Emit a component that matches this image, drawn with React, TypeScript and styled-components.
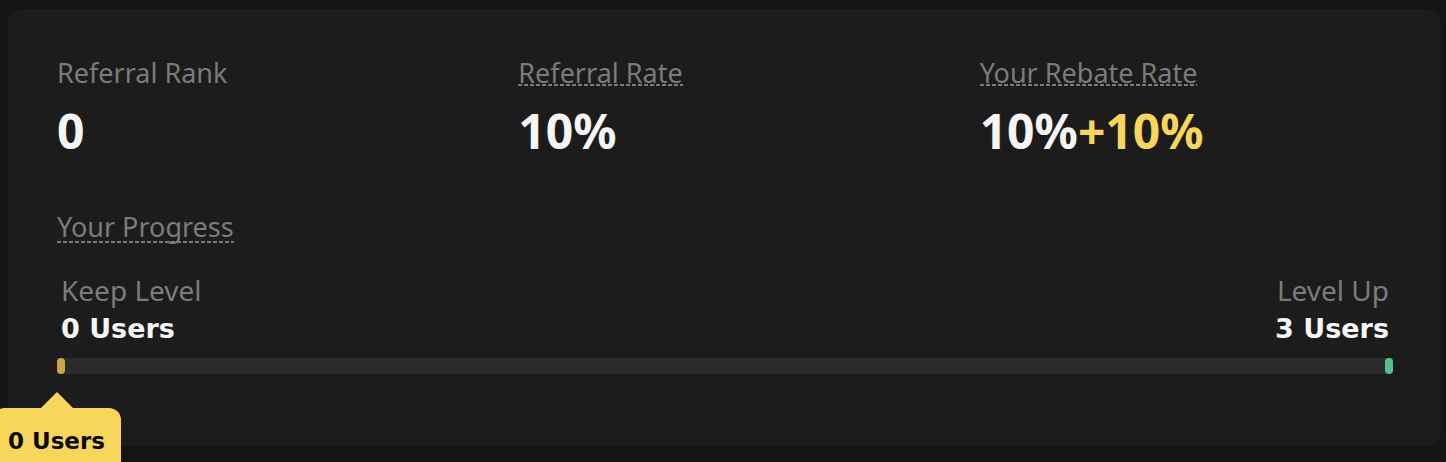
import styled, { createGlobalStyle } from 'styled-components'

const GlobalStyle = createGlobalStyle`
  html, body {
    margin: 0;
    padding: 0;
    background: #141414;
  }
  body {
    font-family: "Noto Sans", Roboto, Arial, sans-serif;
  }
  #root {
    padding: 9px 5px 16px 8px;
    overflow: hidden;
  }
`

const Card = styled.div`
  position: relative;
  background: #1c1c1c;
  border-radius: 14px;
  padding: 47px 48px 72px 49px;
`

const StatsGrid = styled.div`
  display: grid;
  grid-template-columns: repeat(3, 1fr);
  column-gap: 48px;
`

const Stat = styled.div`
  display: flex;
  flex-direction: column;
  gap: 15px;
`

const Label = styled.span<{ $dashed?: boolean }>`
  align-self: flex-start;
  font-size: 27px;
  line-height: 34px;
  color: #7b7b7b;
  background-image: ${p =>
    p.$dashed ? 'linear-gradient(to right, #7b7b7b 4px, transparent 4px)' : 'none'};
  background-size: 6px 2px;
  background-repeat: repeat-x;
  background-position: 0 28px;
`

const ProgressTitle = styled(Label)`
  background-position: 0 31px;
`

const Value = styled.div`
  font-size: 48px;
  line-height: 52px;
  font-weight: 700;
  color: #f5f5f5;
`

const Bonus = styled.span`
  color: #f8d65b;
`

const Progress = styled.div`
  display: flex;
  flex-direction: column;
  margin-top: 53px;
`

const Ends = styled.div`
  display: flex;
  justify-content: space-between;
  padding: 0 4px;
  margin-top: 28px;
`

const End = styled.div<{ $right?: boolean }>`
  display: flex;
  flex-direction: column;
  gap: 3px;
  align-items: ${p => (p.$right ? 'flex-end' : 'flex-start')};
`

const EndLabel = styled.span`
  font-size: 28px;
  line-height: 36px;
  color: #7b7b7b;
`

const EndValue = styled.span`
  font-family: "DejaVu Sans", "Noto Sans", sans-serif;
  font-size: 27px;
  line-height: 36px;
  font-weight: 700;
  color: #f5f5f5;
`

const Track = styled.div`
  position: relative;
  display: flex;
  justify-content: space-between;
  height: 16px;
  margin-top: 11px;
  background: #2b2b2b;
`

const Marker = styled.div<{ $color: string }>`
  position: relative;
  width: 8px;
  height: 16px;
  border-radius: 4px;
  background: ${p => p.$color};
`

const Tooltip = styled.div`
  position: absolute;
  top: 50px;
  left: 50%;
  transform: translateX(-50%);
  margin-left: -4px;
  background: #f8d65b;
  color: #0a0a0a;
  font-family: "DejaVu Sans", "Noto Sans", sans-serif;
  font-size: 23px;
  line-height: 32px;
  font-weight: 700;
  white-space: nowrap;
  padding: 17px 16px 17px 15px;
  border-radius: 12px;

  &::before {
    content: '';
    position: absolute;
    top: -16px;
    left: 50%;
    margin-left: -16px;
    border-left: 16px solid transparent;
    border-right: 16px solid transparent;
    border-bottom: 16px solid #f8d65b;
  }
`

export default function App() {
  return (
    <>
      <GlobalStyle />
      <Card>
        <StatsGrid>
          <Stat>
            <Label>Referral Rank</Label>
            <Value>0</Value>
          </Stat>
          <Stat>
            <Label $dashed>Referral Rate</Label>
            <Value>10%</Value>
          </Stat>
          <Stat>
            <Label $dashed>Your Rebate Rate</Label>
            <Value>
              10%<Bonus>+10%</Bonus>
            </Value>
          </Stat>
        </StatsGrid>

        <Progress>
          <ProgressTitle $dashed>Your Progress</ProgressTitle>
          <Ends>
            <End>
              <EndLabel>Keep Level</EndLabel>
              <EndValue>0 Users</EndValue>
            </End>
            <End $right>
              <EndLabel>Level Up</EndLabel>
              <EndValue>3 Users</EndValue>
            </End>
          </Ends>
          <Track>
            <Marker $color="#c9a545">
              <Tooltip>0 Users</Tooltip>
            </Marker>
            <Marker $color="#56c08e" />
          </Track>
        </Progress>
      </Card>
    </>
  )
}
